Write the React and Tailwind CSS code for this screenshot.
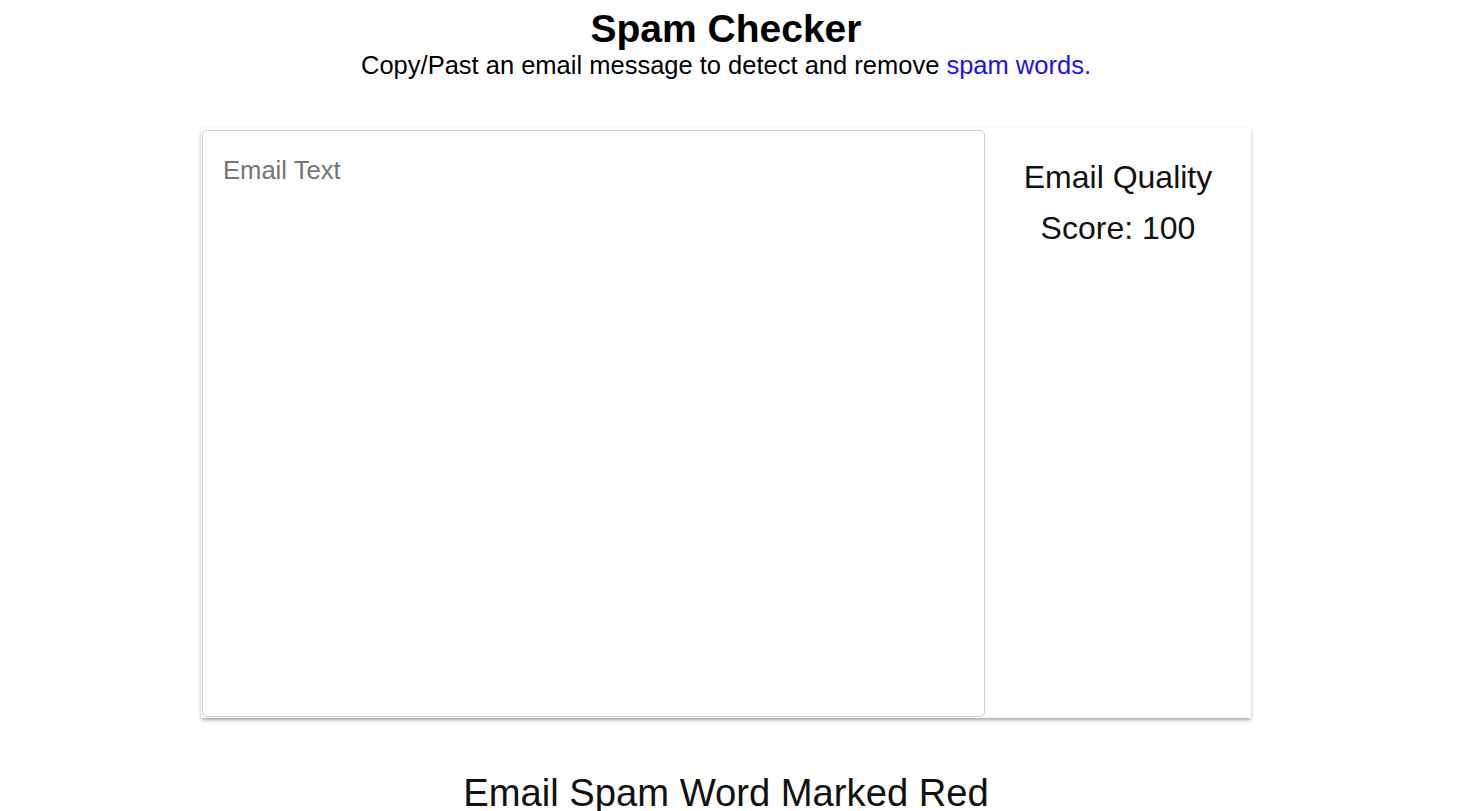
export default function App() {
  return (
    <div className="w-[1452px] min-h-[811px] bg-white text-black" style={{ fontFamily: '"Liberation Sans", Arial, sans-serif' }}>
      <div className="flex flex-col items-center pt-[7px]">
        <h1 className="text-[39px] leading-[44px] font-bold">Spam Checker</h1>
        <p className="pt-[1px] text-[25.5px] leading-[26px]">
          Copy/Past an email message to detect and remove <span className="text-[#1a0dff]">spam words.</span>
        </p>
      </div>
      <div className="mx-auto mt-[50px] flex h-[590px] w-[1050px] bg-white shadow-[0_3px_4px_-1px_rgba(0,0,0,0.3),0_1px_4px_rgba(0,0,0,0.12)]">
        <div className="flex w-[784px] pt-[2px] pb-[1px] pl-[1px]">
          <textarea
            placeholder="Email Text"
            className="h-full w-full resize-none rounded-[5px] border border-[#cfcfcf] bg-white px-[20px] pt-[24px] text-[25.6px] leading-[30px] text-black outline-none placeholder:text-[#757575]"
            style={{ fontFamily: '"Liberation Sans", Arial, sans-serif' }}
          />
        </div>
        <div className="flex flex-1 flex-col items-center pt-[31px]">
          <div className="text-[32px] leading-[37px] text-[#111]">Email Quality</div>
          <div className="mt-[14px] text-[32px] leading-[37px] text-[#111]">Score: 100</div>
        </div>
      </div>
      <div className="mt-[53px] text-center text-[38.2px] leading-[44px] text-[#111]">Email Spam Word Marked Red</div>
    </div>
  );
}
